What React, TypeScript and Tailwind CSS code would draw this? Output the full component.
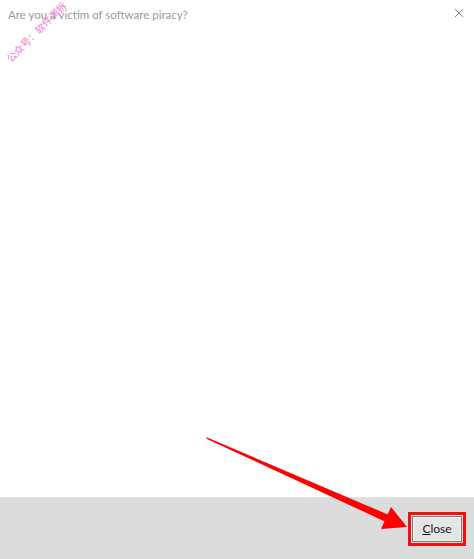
import React from "react";

export default function App() {
  return (
    <div
      className="relative w-[474px] h-[559px] bg-white flex flex-col overflow-hidden"
      style={{ fontFamily: '"Noto Sans", "Noto Sans CJK SC", sans-serif' }}
    >
      {/* title bar */}
      <div className="h-[28px] flex items-center justify-between pl-[8px] pr-[10px]">
        <span
          className="text-[11.5px] text-[#9a9a9a] leading-none mt-[1px]"
          style={{ fontFamily: 'Lato, "Noto Sans", sans-serif' }}
        >
          Are you a victim of software piracy?
        </span>
        <svg width="10" height="10" viewBox="0 0 10 10" className="mt-[-2px]">
          <path d="M1 1 L9 9 M9 1 L1 9" stroke="#8a8a8a" strokeWidth="1" />
        </svg>
      </div>

      <div className="flex-1" />

      {/* footer */}
      <div className="h-[62px] bg-[#dcdbdd] border-t border-[#e4e3e5] flex items-center justify-end pr-[8px]">
        <div className="border-[3px] border-[#f01010] p-[1px]">
          <button
            className="w-[50px] h-[26px] bg-[#e5e5e5] border border-[#7a7a7a] shadow-[inset_0_0_0_1px_#f4f4f4] text-[12px] text-[#1a1a1a] flex items-center justify-center"
            style={{ fontFamily: 'Lato, "Noto Sans", sans-serif' }}
          >
            <span>
              <span className="underline">C</span>lose
            </span>
          </button>
        </div>
      </div>

      {/* watermark */}
      <div
        className="absolute left-[-4px] top-[24px] text-[10px] text-[#f27ad0] whitespace-nowrap rotate-[-45deg] origin-center"
        style={{ fontFamily: '"Noto Sans CJK SC", sans-serif' }}
      >
        公众号：软件调拆
      </div>

      {/* arrow */}
      <svg className="absolute left-0 top-0 pointer-events-none" width="474" height="559" viewBox="0 0 474 559">
        <polygon points="206,437 207,439 386,522 389,515" fill="#ff0000" />
        <polygon points="407,527 381,529 391,507" fill="#ff0000" />
      </svg>
    </div>
  );
}
